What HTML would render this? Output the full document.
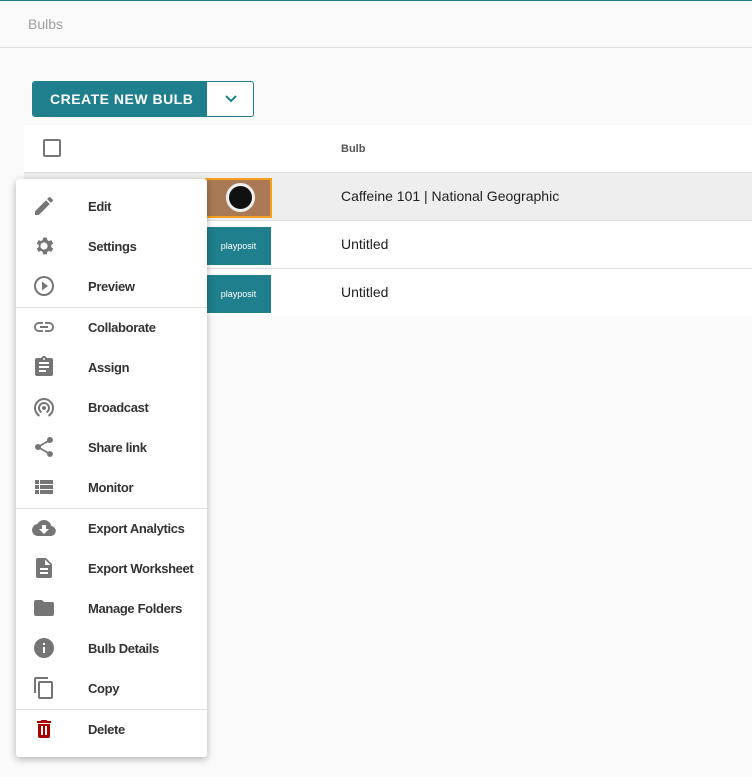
<!DOCTYPE html><html><head><style>
*{margin:0;padding:0;box-sizing:border-box}
body{width:752px;height:777px;background:#fafafa;font-family:"Liberation Sans",Arial,sans-serif;position:relative;overflow:hidden;color:#212121}
.top{position:absolute;left:0;top:0;width:752px;height:1px;background:#1f7f8c}
.hdr{position:absolute;left:0;top:0;width:752px;height:48px;border-bottom:1px solid #ddd}
.hdr span{position:absolute;left:28px;top:16px;font-size:14px;color:#9e9e9e}
.btn{position:absolute;left:32px;top:81px;width:222px;height:36px;border:1px solid #1f7f8c;border-radius:3px;background:#fff;overflow:hidden}
.btn .m{position:absolute;left:0;top:0;width:174px;height:34px;background:#1f7f8c;color:#fff;font-weight:bold;font-size:14px;letter-spacing:0.5px;line-height:34px;padding-left:17px}
.tbl{position:absolute;left:24px;top:125px;width:728px;height:191px;background:#fff}
.row{position:absolute;left:0;width:728px;height:48px;border-bottom:1px solid #ddd}
.row span{position:absolute;left:317px;top:15px;font-size:14px}
.th{position:absolute;left:182px;width:65px;height:38px;background:#1f7f8c;color:#fff;font-size:9px;text-align:center;line-height:38px}
.menu{position:absolute;left:16px;top:179px;width:191px;height:578px;background:#fff;border-radius:3px;box-shadow:0 2px 8px rgba(0,0,0,.3)}
.it{position:absolute;left:0;width:191px;height:40px}
.it svg{position:absolute;left:16px;top:8px;width:24px;height:24px;fill:#757575}
.it span{position:absolute;left:72px;top:13px;font-size:13px;font-weight:bold;color:#333;letter-spacing:-0.35px}
.dv{position:absolute;left:0;width:191px;height:1px;background:#e0e0e0}
</style></head><body>
<div class="hdr"><span>Bulbs</span></div><div class="top"></div>
<div class="btn"><div class="m">CREATE NEW BULB</div><svg style="position:absolute;left:190px;top:10px" width="16" height="14" viewBox="0 0 16 14"><path d="M3 4l5 5 5-5" stroke="#1f7f8c" stroke-width="2" fill="none"/></svg></div>
<div class="tbl">
<div class="row" style="top:0;height:48px"><div style="position:absolute;left:19px;top:14px;width:18px;height:18px;border:2px solid #757575;border-radius:2px"></div><span style="font-size:11px;font-weight:bold;color:#555;top:18px">Bulb</span></div>
<div class="row" style="top:48px;background:#eee"><div style="position:absolute;left:181px;top:5px;width:67px;height:40px;border:2px solid #f5a020;background:#a97a55"><div style="position:absolute;left:19px;top:3px;width:29px;height:29px;border-radius:50%;background:#111;border:3px solid #eee"></div></div><span>Caffeine 101 | National Geographic</span></div>
<div class="row" style="top:96px"><div class="th" style="top:6px">playposit</div><span>Untitled</span></div>
<div class="row" style="top:144px;border:none"><div class="th" style="top:6px">playposit</div><span>Untitled</span></div>
</div>
<div class="menu">
<div class="it" style="top:7px"><svg viewBox="0 0 24 24"><path d="M3 17.25V21h3.75L17.81 9.94l-3.75-3.75L3 17.25zM20.71 7.04a1 1 0 000-1.41l-2.34-2.34a1 1 0 00-1.41 0l-1.830 1.83 3.75 3.75 1.83-1.83z"/></svg><span>Edit</span></div>
<div class="it" style="top:47px"><svg viewBox="0 0 24 24"><path d="M19.14 12.94a7 7 0 000-1.88l2.03-1.58-1.92-3.32-2.39.96a7 7 0 00-1.62-.94L14.88 3.6h-3.84l-.36 2.58a7 7 0 00-1.62.94l-2.39-.96-1.92 3.32 2.03 1.58a7 7 0 000 1.88l-2.03 1.58 1.92 3.32 2.39-.96c.5.38 1.04.7 1.62.94l.36 2.58h3.84l.36-2.58a7 7 0 001.62-.94l2.39.96 1.92-3.32-2.03-1.580zM12 15.6a3.6 3.6 0 110-7.2 3.6 3.6 0 010 7.2z"/></svg><span>Settings</span></div>
<div class="it" style="top:87px"><svg viewBox="0 0 24 24"><path d="M10 16.5l6-4.5-6-4.5v9zM12 2a10 10 0 100 20 10 10 0 000-20zm0 18a8 8 0 110-16 8 8 0 010 16z"/></svg><span>Preview</span></div>
<div class="dv" style="top:128px"></div>
<div class="it" style="top:128px"><svg viewBox="0 0 24 24"><path d="M3.9 12c0-1.71 1.39-3.1 3.1-3.1h4V7H7a5 5 0 000 10h4v-1.9H7c-1.71 0-3.1-1.39-3.1-3.1zM8 13h8v-2H8v2zm9-6h-4v1.9h4c1.71 0 3.1 1.39 3.1 3.1s-1.39 3.1-3.1 3.1h-4V17h4a5 5 0 000-10z"/></svg><span>Collaborate</span></div>
<div class="it" style="top:168px"><svg viewBox="0 0 24 24"><path d="M19 3h-4.18C14.4 1.84 13.3 1 12 1s-2.4.84-2.82 2H5a2 2 0 00-2 2v14a2 2 0 002 2h14a2 2 0 002-2V5a2 2 0 00-2-2zm-7 0a1 1 0 110 2 1 1 0 010-2zm2 14H7v-2h7v2zm3-4H7v-2h10v2zm0-4H7V7h10v2z"/></svg><span>Assign</span></div>
<div class="it" style="top:208px"><svg viewBox="0 0 24 24"><path d="M12 11a2 2 0 100 4 2 2 0 000-4zm6 2a6 6 0 10-9 5.19l1-1.74A4 4 0 1116 13a4 4 0 01-2 3.45l1 1.74A6 6 0 0018 13zM12 3a10 10 0 00-5 18.65l1-1.73a8 8 0 118 0l1 1.73A10 10 0 0012 3z"/></svg><span>Broadcast</span></div>
<div class="it" style="top:248px"><svg viewBox="0 0 24 24"><path d="M18 16.08c-.76 0-1.44.3-1.96.77L8.91 12.7a3 3 0 000-1.39l7.05-4.11A3 3 0 1015 5c0 .24.04.47.09.7L8.04 9.81a3 3 0 100 4.38l7.12 4.16c-.05.21-.08.43-.08.65A2.92 2.92 0 1018 16.08z"/></svg><span>Share link</span></div>
<div class="it" style="top:288px"><svg viewBox="0 0 24 24"><path d="M3 14h4v-4H3v4zm0 5h4v-4H3v4zM3 9h4V5H3v4zm5 5h13v-4H8v4zm0 5h13v-4H8v4zM8 5v4h13V5H8z"/></svg><span>Monitor</span></div>
<div class="dv" style="top:329px"></div>
<div class="it" style="top:329px"><svg viewBox="0 0 24 24"><path d="M19.35 10.04A7.49 7.49 0 0012 4C9.11 4 6.6 5.64 5.35 8.04A6 6 0 006 20h13a5 5 0 00.35-9.960zM17 13l-5 5-5-5h3V9h4v4h3z"/></svg><span>Export Analytics</span></div>
<div class="it" style="top:369px"><svg viewBox="0 0 24 24"><path d="M14 2H6a2 2 0 00-2 2v16a2 2 0 002 2h12a2 2 0 002-2V8l-6-6zm2 16H8v-2h8v2zm0-4H8v-2h8v2zm-3-5V3.5L18.5 9H13z"/></svg><span>Export Worksheet</span></div>
<div class="it" style="top:409px"><svg viewBox="0 0 24 24"><path d="M10 4H4a2 2 0 00-2 2v12a2 2 0 002 2h16a2 2 0 002-2V8a2 2 0 00-2-2h-8l-2-2z"/></svg><span>Manage Folders</span></div>
<div class="it" style="top:449px"><svg viewBox="0 0 24 24"><path d="M12 2a10 10 0 100 20 10 10 0 000-20zm1 15h-2v-6h2v6zm0-8h-2V7h2v2z"/></svg><span>Bulb Details</span></div>
<div class="it" style="top:489px"><svg viewBox="0 0 24 24"><path d="M16 1H4a2 2 0 00-2 2v14h2V3h12V1zm3 4H8a2 2 0 00-2 2v14a2 2 0 002 2h11a2 2 0 002-2V7a2 2 0 00-2-2zm0 16H8V7h11v14z"/></svg><span>Copy</span></div>
<div class="dv" style="top:530px"></div>
<div class="it" style="top:530px"><svg viewBox="0 0 24 24" style="fill:#a00"><path d="M6 19a2 2 0 002 2h8a2 2 0 002-2V7H6v12zm3-10h2v9H9V9zm4 0h2v9h-2V9zM15.5 4l-1-1h-5l-1 1H5v2h14V4z"/></svg><span>Delete</span></div>
</div>
</body></html>
